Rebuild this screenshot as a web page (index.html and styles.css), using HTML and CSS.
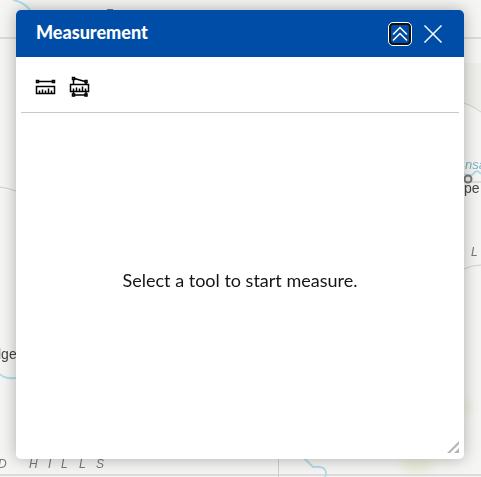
FILE: index.html
```html
<!DOCTYPE html>
<html lang="en">
<head>
<meta charset="utf-8">
<meta name="viewport" content="width=device-width, initial-scale=1">
<title>Measurement</title>
<link rel="stylesheet" href="styles.css">
</head>
<body>
<svg class="map" viewBox="0 0 481 477" preserveAspectRatio="xMidYMid slice" aria-hidden="true">
  <defs><filter id="soft" x="-50%" y="-50%" width="200%" height="200%"><feGaussianBlur stdDeviation="5"/></filter></defs>
  <path class="terrain" d="M464 63H481V112Q472 106 464 103Z"/>
  <g class="vegetation" filter="url(#soft)"><ellipse cx="417" cy="466" rx="17" ry="8"/><ellipse cx="467" cy="406" rx="5" ry="7"/></g>
  <path class="road" d="M0 38H481M0 475H481"/>
  <path class="boundary" d="M0 187Q8 188 16 191M464 269Q472 265 481 265M278.500 458V477M464 103Q473 106 481 112"/>
  <path class="river" d="M13 0Q24 2 30 10M0 374Q4 379 16 378M304 458L313 467Q323 466 325 470Q327 472 325 477M464 174Q471 178 475 172Q478 170 481 174"/>
  <path class="road" d="M464 182H481"/>
  <circle class="town" cx="468" cy="179" r="3.500"/>
  <path class="town" d="M107 10H113"/>
  <text class="water-label" x="465" y="169">nsas</text>
  <text class="town-label" x="464" y="193">pe</text>
  <text class="town-label" x="-2" y="359">lge</text>
  <text class="region-label" x="471" y="256">L</text>
  <text class="region-label" y="468"><tspan x="-2">D</tspan><tspan x="29">H</tspan><tspan x="48">I</tspan><tspan x="61">L</tspan><tspan x="79">L</tspan><tspan x="96">S</tspan></text>
</svg>
<section class="panel" aria-labelledby="title">
  <header class="panel-header">
    <h1 id="title">Measurement</h1>
    <button class="header-button collapse" type="button" aria-label="Collapse">
      <svg width="16" height="16" viewBox="0 0 16 16"><path d="M1 8.500L8 1.500L15 8.500M1 14.500L8 7.500L15 14.500"/></svg>
    </button>
    <button class="header-button" type="button" aria-label="Close">
      <svg width="20" height="20" viewBox="0 0 20 20"><path d="M1.500 1.500L18.500 18.500M18.500 1.500L1.500 18.500"/></svg>
    </button>
  </header>
  <div class="toolbar" role="toolbar" aria-label="Measurement tools">
    <button class="tool" type="button" aria-label="Measure distance">
      <svg width="22" height="22" viewBox="0 0 22 22"><path d="M1.500 4.500h2v2h-2zM17.500 4.500h2v2h-2zM3.500 5.500h14M1.500 10.500h18v7h-18zM4.500 17v-2.500M7.500 17v-3.500M10.500 17v-2.500M13.500 17v-4.500M16.500 17v-2.500"/></svg>
    </button>
    <button class="tool" type="button" aria-label="Measure area">
      <svg width="22" height="22" viewBox="0 0 22 22"><path d="M3.500 1.500h2v2h-2zM16 4.500h2v2h-2zM3.500 18h2v2h-2zM16 18h2v2h-2zM5.500 2.500l10.500 3M4.500 3.500v5M17 6.500v2M4.500 15.500v2.500M17 15.500v2.500M5.500 19h10.500M1.500 8.500h18v7h-18zM4.500 15v-2.500M7.500 15v-3.500M10.500 15v-2.500M13.500 15v-4.500M16.500 15v-2.500"/></svg>
    </button>
  </div>
  <p class="message">Select a tool to start measure.</p>
  <svg class="grip" width="12" height="12" viewBox="0 0 12 12" aria-hidden="true"><path d="M0 12L12 0V3L3 12ZM7 12L12 7V12Z"/></svg>
</section>
</body>
</html>
```
FILE: styles.css
```css
* { box-sizing: border-box; }
body {
  margin: 0;
  min-height: 100vh;
  display: flex;
  padding: 10px 17px 18px 16px;
  background: #f5f6f3;
  font-family: Lato, "Liberation Sans", sans-serif;
}
.map {
  position: fixed;
  inset: 0;
  width: 100%;
  height: 100%;
  fill: none;
}
.terrain { fill: #efefeb; }
.vegetation { fill: #e9edda; }
.road { stroke: #dfdadf; stroke-width: 2; }
.boundary { stroke: #cfd0ce; }
.river { stroke: #b4dce9; stroke-width: 2; }
.town { fill: #e9e9e5; stroke: #777; stroke-width: 2; }
.water-label, .town-label, .region-label { font-family: "Liberation Sans", sans-serif; }
.water-label { fill: #7faec3; font-size: 13px; font-style: italic; }
.town-label { fill: #444; font-size: 14px; }
.region-label { fill: #777; font-size: 12px; font-style: italic; }
.panel {
  position: relative;
  flex: 1;
  display: flex;
  flex-direction: column;
  overflow: hidden;
  border-radius: 5px;
  background: #fff;
  box-shadow: 0 0 16px rgba(0, 0, 0, .3);
}
.panel-header {
  display: flex;
  align-items: center;
  gap: 10px;
  height: 47px;
  padding: 0 20px;
  background: #004da8;
  color: #fff;
}
h1 {
  flex: 1;
  margin: 0;
  font-size: 18px;
  line-height: 24px;
  font-weight: 900;
  padding-bottom: 4px;
}
button {
  display: grid;
  place-items: center;
  padding: 0;
  border: 0;
  background: none;
  color: inherit;
}
svg { display: block; }
button path { fill: none; stroke: currentColor; }
.header-button { width: 22px; height: 24px; }
.header-button path { stroke-width: 1.5; }
.collapse {
  width: 24px;
  border: 1px solid #fff;
  border-radius: 5px;
  box-shadow: inset 0 0 0 2px #101010;
}
.toolbar {
  display: flex;
  align-items: center;
  gap: 12px;
  height: 56px;
  margin: 0 5px;
  padding: 4px 14px 0;
  border-bottom: 1px solid #c8c8c8;
}
.tool { width: 22px; height: 22px; color: #000; }
.tool path { stroke-width: 1.5; }
.message {
  flex: 1;
  display: grid;
  place-items: center;
  margin: 0;
  padding-bottom: 12px;
  color: #151515;
  font-size: 18px;
  line-height: 24px;
}
.grip {
  position: absolute;
  right: 5px;
  bottom: 6px;
  fill: #b4b4b4;
}
```
